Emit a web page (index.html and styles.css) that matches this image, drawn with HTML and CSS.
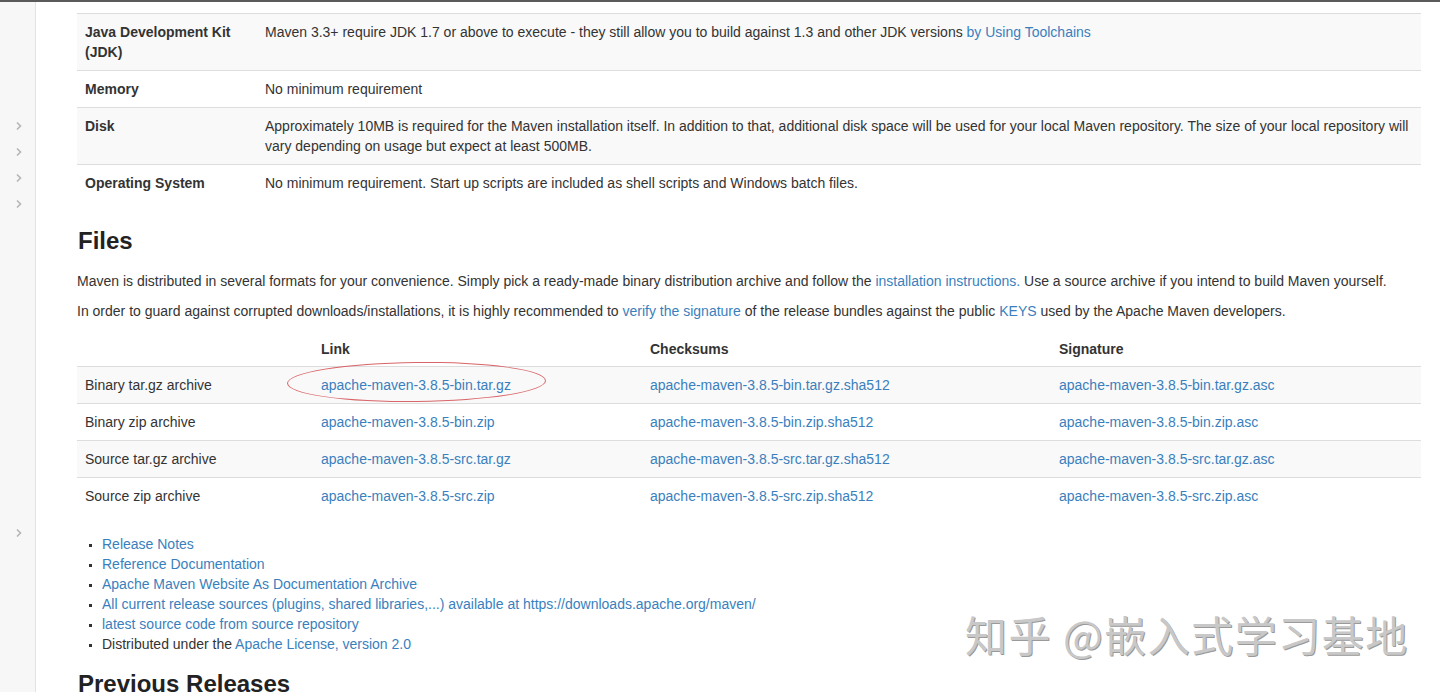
FILE: index.html
```html
<!DOCTYPE html>
<html lang="en">
<head>
    <meta charset="UTF-8">
    <title>Maven – Download Apache Maven</title>
    <link rel="stylesheet" href="styles.css">
</head>
<body>
    <div class="topline"></div>
    <div class="page">
        <div class="sidebar">
            <div class="toggles">
                <span class="chev"><svg width="8" height="10" viewBox="0 0 8 10"><path d="M2 1.5 L5.5 5 L2 8.5" fill="none" stroke="#b5b5b5" stroke-width="1.6"/></svg></span>
                <span class="chev"><svg width="8" height="10" viewBox="0 0 8 10"><path d="M2 1.5 L5.5 5 L2 8.5" fill="none" stroke="#b5b5b5" stroke-width="1.6"/></svg></span>
                <span class="chev"><svg width="8" height="10" viewBox="0 0 8 10"><path d="M2 1.5 L5.5 5 L2 8.5" fill="none" stroke="#b5b5b5" stroke-width="1.6"/></svg></span>
                <span class="chev"><svg width="8" height="10" viewBox="0 0 8 10"><path d="M2 1.5 L5.5 5 L2 8.5" fill="none" stroke="#b5b5b5" stroke-width="1.6"/></svg></span>
            </div>
            <div class="toggles lower">
                <span class="chev"><svg width="8" height="10" viewBox="0 0 8 10"><path d="M2 1.5 L5.5 5 L2 8.5" fill="none" stroke="#b5b5b5" stroke-width="1.6"/></svg></span>
            </div>
        </div>

        <div class="main">
            <table class="table striped reqs">
                <tbody>
                    <tr>
                        <th>Java Development Kit (JDK)</th>
                        <td>Maven 3.3+ require JDK 1.7 or above to execute - they still allow you to build against 1.3 and other JDK versions <a href="#">by Using Toolchains</a></td>
                    </tr>
                    <tr>
                        <th>Memory</th>
                        <td>No minimum requirement</td>
                    </tr>
                    <tr>
                        <th>Disk</th>
                        <td>Approximately 10MB is required for the Maven installation itself. In addition to that, additional disk space will be used for your local Maven repository. The size of your local repository will vary depending on usage but expect at least 500MB.</td>
                    </tr>
                    <tr>
                        <th>Operating System</th>
                        <td>No minimum requirement. Start up scripts are included as shell scripts and Windows batch files.</td>
                    </tr>
                </tbody>
            </table>

            <h2>Files</h2>
            <p>Maven is distributed in several formats for your convenience. Simply pick a ready-made binary distribution archive and follow the <a href="#">installation instructions.</a> Use a source archive if you intend to build Maven yourself.</p>
            <p>In order to guard against corrupted downloads/installations, it is highly recommended to <a href="#">verify the signature</a> of the release bundles against the public <a href="#">KEYS</a> used by the Apache Maven developers.</p>

            <table class="table striped files">
                <colgroup>
                    <col class="c-name">
                    <col class="c-link">
                    <col class="c-sum">
                    <col>
                </colgroup>
                <thead>
                    <tr>
                        <th></th>
                        <th>Link</th>
                        <th>Checksums</th>
                        <th>Signature</th>
                    </tr>
                </thead>
                <tbody>
                    <tr>
                        <td>Binary tar.gz archive</td>
                        <td><span class="circled"><a href="#">apache-maven-3.8.5-bin.tar.gz</a></span></td>
                        <td><a href="#">apache-maven-3.8.5-bin.tar.gz.sha512</a></td>
                        <td><a href="#">apache-maven-3.8.5-bin.tar.gz.asc</a></td>
                    </tr>
                    <tr>
                        <td>Binary zip archive</td>
                        <td><a href="#">apache-maven-3.8.5-bin.zip</a></td>
                        <td><a href="#">apache-maven-3.8.5-bin.zip.sha512</a></td>
                        <td><a href="#">apache-maven-3.8.5-bin.zip.asc</a></td>
                    </tr>
                    <tr>
                        <td>Source tar.gz archive</td>
                        <td><a href="#">apache-maven-3.8.5-src.tar.gz</a></td>
                        <td><a href="#">apache-maven-3.8.5-src.tar.gz.sha512</a></td>
                        <td><a href="#">apache-maven-3.8.5-src.tar.gz.asc</a></td>
                    </tr>
                    <tr>
                        <td>Source zip archive</td>
                        <td><a href="#">apache-maven-3.8.5-src.zip</a></td>
                        <td><a href="#">apache-maven-3.8.5-src.zip.sha512</a></td>
                        <td><a href="#">apache-maven-3.8.5-src.zip.asc</a></td>
                    </tr>
                </tbody>
            </table>

            <ul class="links">
                <li><a href="#">Release Notes</a></li>
                <li><a href="#">Reference Documentation</a></li>
                <li><a href="#">Apache Maven Website As Documentation Archive</a></li>
                <li><a href="#">All current release sources (plugins, shared libraries,...) available at https://downloads.apache.org/maven/</a></li>
                <li><a href="#">latest source code from source repository</a></li>
                <li>Distributed under the <a href="#">Apache License, version 2.0</a></li>
            </ul>

            <h2>Previous Releases</h2>
        </div>
    </div>

    <!-- watermark from the screenshot source -->
    <div class="watermark">知乎 @嵌入式学习基地</div>
</body>
</html>
```

FILE: styles.css
```css
html, body {
    margin: 0;
    padding: 0;
    height: 692px;
    overflow: hidden;
}
body {
    font-family: "Liberation Sans", Arial, sans-serif;
    font-size: 14px;
    line-height: 20px;
    color: #333;
    background: #fff;
    position: relative;
}
a {
    color: #3a7fbd;
    text-decoration: none;
}

.topline {
    height: 2px;
    background: #5a5a5a;
}
.page {
    display: flex;
    height: 690px;
}
.sidebar {
    width: 35px;
    flex: none;
    background: #f7f7f7;
    border-right: 1px solid #e3e3e3;
}
.toggles {
    display: flex;
    flex-direction: column;
    align-items: center;
    gap: 16px;
    padding-top: 119px;
    padding-left: 2px;
}
.toggles.lower {
    padding-top: 319px;
}
.chev {
    display: block;
    height: 10px;
}
.chev svg {
    display: block;
}

.main {
    flex: 1;
    padding: 11px 19px 0 41px;
}

/* tables */
.table {
    width: 100%;
    border-collapse: collapse;
    border-spacing: 0;
    margin-bottom: 20px;
}
.table th,
.table td {
    padding: 8px;
    text-align: left;
    vertical-align: top;
    border-top: 1px solid #ddd;
}
.table th {
    font-weight: bold;
}
.table.striped tbody tr:nth-child(odd) > * {
    background: #f9f9f9;
}
.reqs th {
    width: 164px;
}
.files thead th {
    border-top: 0;
    border-bottom: 1px solid #ddd;
    padding-bottom: 7px;
}
.files tbody tr:first-child td {
    border-top: 0;
}
.files .c-name { width: 236px; }
.files .c-link { width: 329px; }
.files .c-sum { width: 409px; }

.circled {
    position: relative;
}
.circled::after {
    content: "";
    position: absolute;
    left: -34px;
    right: -35px;
    top: -15px;
    bottom: -9px;
    border: 1.5px solid #d9666a;
    border-radius: 50%;
    transform: rotate(-0.6deg);
    pointer-events: none;
}

h2 {
    font-size: 24px;
    line-height: 40px;
    margin: 0 0 10px;
    padding-left: 1px;
    font-weight: bold;
    color: #222;
}
p {
    margin: 0 0 10px;
}

.links {
    list-style: square;
    margin: 0 0 10px;
    padding-left: 25px;
}
.links li::marker {
    font-size: 10px;
    color: #333;
}

.watermark {
    position: absolute;
    left: 965px;
    top: 606px;
    font-family: "Noto Sans CJK SC", sans-serif;
    font-size: 42px;
    line-height: 56px;
    letter-spacing: 1.5px;
    color: #c8c8c8;
    text-shadow: 1px 1px 0 #9a9a9a, -1px -1px 0 #fff;
    white-space: nowrap;
}
```
